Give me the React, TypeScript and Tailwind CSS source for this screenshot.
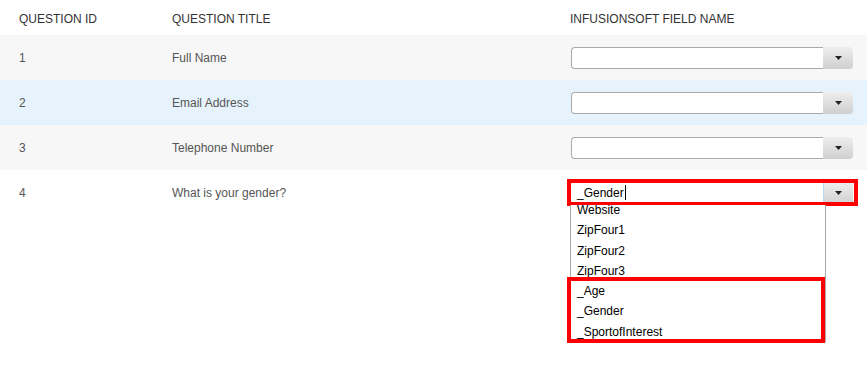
import React from 'react';

const rows = [
  { id: '1', title: 'Full Name', bg: 'bg-[#f7f7f7]' },
  { id: '2', title: 'Email Address', bg: 'bg-[#e7f3fc]' },
  { id: '3', title: 'Telephone Number', bg: 'bg-[#f7f7f7]' },
];

const options = ['Website', 'ZipFour1', 'ZipFour2', 'ZipFour3', '_Age', '_Gender', '_SportofInterest'];

const Caret = () => (
  <svg width="7" height="4" viewBox="0 0 7 4" className="block">
    <path d="M0 0 H7 L3.5 4 Z" fill="#222" />
  </svg>
);

const FieldSelect = () => (
  <div className="flex h-[22px] w-[282px]">
    <div className="flex-1 rounded-l-[4px] border border-r-0 border-[#a9a9a9] bg-white" />
    <div className="flex w-[30px] items-center justify-center rounded-r-[4px] bg-gradient-to-b from-[#eeeeee] to-[#cfcfcf]">
      <Caret />
    </div>
  </div>
);

export default function App() {
  return (
    <div className="h-[382px] w-[867px] bg-white font-['Liberation_Sans',Arial,sans-serif] text-[12px]">
      {/* Header */}
      <div className="grid h-[35px] grid-cols-[172px_398px_1fr] items-center text-[#333]">
        <div className="pl-[19px] pt-[2px]">QUESTION ID</div>
        <div className="pt-[2px]">QUESTION TITLE</div>
        <div className="pt-[2px]">INFUSIONSOFT FIELD NAME</div>
      </div>

      {rows.map(r => (
        <div key={r.id} className={`grid h-[45px] grid-cols-[172px_398px_1fr] items-center text-[#555] ${r.bg}`}>
          <div className="pl-[19px]">{r.id}</div>
          <div>{r.title}</div>
          <div className="pl-[1px] pt-[1px]">
            <FieldSelect />
          </div>
        </div>
      ))}

      {/* Row 4 with open dropdown */}
      <div className="grid h-[45px] grid-cols-[172px_398px_1fr] items-center text-[#555]">
        <div className="pl-[19px]">4</div>
        <div>What is your gender?</div>
        <div className="pl-[1px]">
          <div className="relative flex h-[21px] w-[282px]">
            <div className="flex flex-1 items-center bg-white pl-[6px] text-black">
              _Gender<span className="ml-[1px] h-[15px] w-px bg-black" />
            </div>
            <div className="flex w-[30px] items-center justify-center border-l border-[#b9d8f2] bg-gradient-to-b from-[#eeeeee] to-[#d2d2d2]">
              <Caret />
            </div>

            {/* red highlight around input */}
            <div className="pointer-events-none absolute -top-[3px] -bottom-[3px] -left-[4px] -right-[5px] border-4 border-[#ff0000]" />

            {/* dropdown list */}
            <div className="absolute left-[-1px] top-[23px] h-[137px] w-[256px] overflow-hidden border-x border-[#a9a9a9] bg-white text-black">
              <div className="-mt-[5px]">
                {options.map(o => (
                  <div key={o} className="h-[20.3px] pl-[6px] leading-[20px]">
                    {o}
                  </div>
                ))}
              </div>
            </div>

            {/* red highlight around custom fields */}
            <div className="pointer-events-none absolute left-[-4px] top-[95px] h-[66px] w-[258px] border-4 border-[#ff0000]" />
          </div>
        </div>
      </div>
    </div>
  );
}
